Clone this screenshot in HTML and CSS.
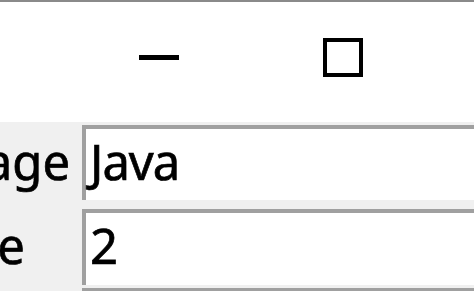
FILE: index.html
```html
<!DOCTYPE html>
<html>
<head>
<meta charset="utf-8">
<link rel="stylesheet" href="styles.css">
</head>
<body>
<div class="window">
  <div class="titlebar">
    <div class="caption-btn"><span class="icon-min"></span></div>
    <div class="caption-btn"><span class="icon-max"></span></div>
    <div class="caption-btn"></div>
  </div>
  <div class="form">
    <div class="row row-first">
      <div class="label"><span class="label-text">Language</span></div>
      <div class="field">Java</div>
    </div>
    <div class="row row-second">
      <div class="label"><span class="label-text">Tab Size</span></div>
      <div class="field">2</div>
    </div>
    <div class="row">
      <div class="label"></div>
      <div class="field"></div>
    </div>
  </div>
</div>
</body>
</html>
```

FILE: styles.css
```css
html, body {
  margin: 0;
  padding: 0;
  background: #ffffff;
  overflow: hidden;
}

.window {
  width: 474px;
  height: 291px;
  overflow: hidden;
  font-family: "Noto Sans", "Open Sans", sans-serif;
  color: #000;
}

.titlebar {
  height: 120px;
  border-top: 2px solid #8a8a8a;
  background: #ffffff;
  display: flex;
  padding-left: 68px;
}

.caption-btn {
  flex: 0 0 183px;
  height: 111px;
  display: flex;
  align-items: center;
  justify-content: center;
}

.icon-min {
  width: 40px;
  height: 5px;
  background: #000;
  margin-right: 2px;
}

.icon-max {
  width: 32px;
  height: 31px;
  border: 4px solid #000;
  margin-top: 0;
}

.form {
  background: #f0f0f0;
  padding-top: 3px;
  height: 200px;
}

.row {
  display: flex;
  height: 75px;
}

.row-first {
  margin-bottom: 9px;
}

.row-second {
  height: 76px;
  margin-bottom: 3px;
}

.label {
  flex: 0 0 82px;
  overflow: hidden;
  white-space: nowrap;
  padding-top: 4px;
  font-size: 49px;
  line-height: 64px;
  -webkit-text-stroke: 0.7px #000;
}

.label-text {
  display: inline-block;
  margin-left: -159px;
}

.field {
  flex: 1;
  background: #ffffff;
  border-top: 4px solid #a0a0a0;
  border-left: 4px solid #a0a0a0;
  padding-left: 4px;
  font-size: 49px;
  line-height: 64px;
  white-space: nowrap;
  letter-spacing: -1px;
  -webkit-text-stroke: 0.7px #000;
}
```
